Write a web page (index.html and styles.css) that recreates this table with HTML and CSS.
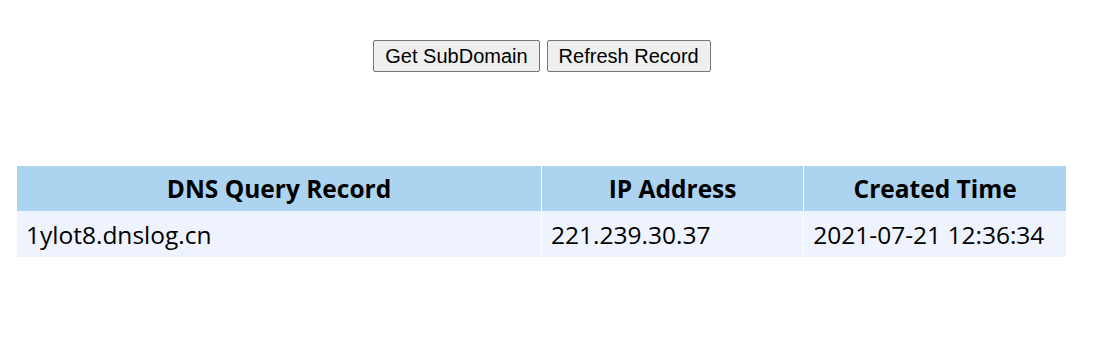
FILE: index.html
```html
<!DOCTYPE html>
<html>
<head>
  <title>DNSLog</title>
  <link rel="stylesheet" href="styles.css">
</head>
<body>
  <div class="toolbar">
    <button class="btn">Get SubDomain</button>
    <button class="btn">Refresh Record</button>
  </div>

  <table class="records">
    <thead>
      <tr>
        <th class="col-domain">DNS Query Record</th>
        <th class="col-ip">IP Address</th>
        <th class="col-time">Created Time</th>
      </tr>
    </thead>
    <tbody>
      <tr>
        <td>1ylot8.dnslog.cn</td>
        <td>221.239.30.37</td>
        <td>2021-07-21 12:36:34</td>
      </tr>
    </tbody>
  </table>
</body>
</html>
```

FILE: styles.css
```css
body {
  margin: 0;
  padding: 40px 0 0 0;
  font-family: "Open Sans", "Noto Sans", sans-serif;
  background: #fff;
}

.toolbar {
  display: flex;
  justify-content: center;
  gap: 7px;
  padding-right: 35px;
}

.btn {
  font-family: "Liberation Sans", Arial, sans-serif;
  font-size: 20px;
  height: 32px;
  padding: 0 11px;
  color: #000;
  background-color: #efefef;
  border: 1px solid #767676;
  border-radius: 2px;
}

.records {
  width: 1049px;
  margin: 94px 0 0 17px;
  border-collapse: collapse;
  font-size: 24.5px;
}

.records th {
  height: 45px;
  padding: 0 8px;
  background-color: #acd3ef;
  font-weight: 700;
  text-align: center;
  color: #000;
}

.records td {
  height: 46px;
  padding: 0 9px;
  background-color: #eef3fd;
  color: #000;
}

.records th + th,
.records td + td {
  border-left: 1px solid #fff;
}

.col-domain {
  width: 50%;
}

.col-ip,
.col-time {
  width: 25%;
}
```
